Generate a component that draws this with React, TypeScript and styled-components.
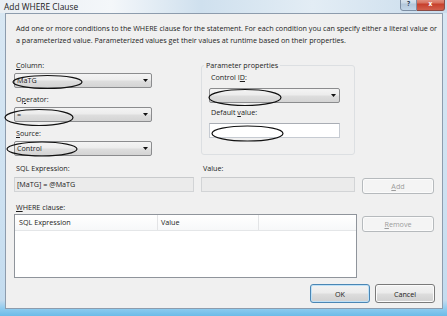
import React from "react";
import styled, { createGlobalStyle } from "styled-components";

const Global = createGlobalStyle`
  html, body { margin: 0; padding: 0; background: #c8ddef; }
  #root { width: 447px; height: 316px; }
`;

const FONT = `"Open Sans", "Noto Sans", "DejaVu Sans", sans-serif`;

const Window = styled.div`
  position: relative;
  width: 447px;
  height: 316px;
  display: flex;
  flex-direction: column;
  overflow: hidden;
  font-family: ${FONT};
  color: #1c1c1c;
  background: linear-gradient(
    180deg,
    #eaf1f7 0px,
    #d8e7f3 13px,
    #cde1f1 200px,
    #c4dcef 300px,
    #8ccaee 309px,
    #6cbbe8 316px
  );
`;

const TitleBar = styled.div`
  flex: none;
  height: 13px;
  display: flex;
  align-items: flex-start;
  justify-content: space-between;
  padding-left: 4px;
  background: linear-gradient(90deg, #e9eef3 0%, #f4f7fa 25%, #cfe0ee 45%, #e3edf5 70%, #c9dcec 100%);
`;

const Title = styled.span`
  font-size: 8.4px;
  line-height: 13px;
  color: #1a1a1a;
`;

const CaptionButtons = styled.div`
  display: flex;
  margin-right: 2px;
  margin-top: -4px;
`;

const CaptionButton = styled.div<{ $close?: boolean }>`
  width: ${(p) => (p.$close ? 28 : 17)}px;
  height: 15px;
  box-sizing: border-box;
  border: 1px solid ${(p) => (p.$close ? "#8a4b45" : "#7d8ea3")};
  border-left-width: ${(p) => (p.$close ? 0 : 1)}px;
  border-radius: ${(p) => (p.$close ? "0 0 3px 0" : "0 0 0 3px")};
  background: ${(p) =>
    p.$close
      ? "linear-gradient(180deg, #e8a99c 0%, #d8725f 45%, #c7402c 55%, #d2604c 100%)"
      : "linear-gradient(180deg, #e5edf4 0%, #cad9e7 45%, #b3c7da 55%, #c3d6e8 100%)"};
  display: flex;
  align-items: flex-end;
  justify-content: center;
  padding-bottom: 2px;
  font-size: 6.5px;
  line-height: 8px;
  font-weight: bold;
  color: ${(p) => (p.$close ? "#ffffff" : "#2c3e55")};
`;

const FrameBody = styled.div`
  flex: 1;
  display: flex;
  padding: 0 6px 7px 5px;
  min-height: 0;
`;

const Client = styled.div`
  flex: 1;
  display: flex;
  flex-direction: column;
  border: 1px solid #8d9cad;
  background: #f0f0f0;
  padding: 8px 5px 0 8px;
  font-size: 7.2px;
`;

const Description = styled.p`
  margin: 0;
  padding-left: 2px;
  line-height: 12px;
  white-space: nowrap;
`;

const TopSection = styled.div`
  margin-top: 13px;
  display: grid;
  grid-template-columns: 180px 154px;
  column-gap: 7px;
  align-items: start;
`;

const Stack = styled.div`
  display: flex;
  flex-direction: column;
`;

const Field = styled.div<{ $gap: number; $after: number }>`
  display: flex;
  flex-direction: column;
  gap: ${(p) => p.$gap}px;
  margin-bottom: ${(p) => p.$after}px;
`;

const Label = styled.span`
  height: 12px;
  line-height: 12px;
  padding-left: 2px;
  white-space: nowrap;
`;

const Combo = styled.div<{ $w: number }>`
  width: ${(p) => p.$w}px;
  height: 15px;
  box-sizing: border-box;
  border: 1px solid #8b8c8e;
  border-radius: 2px;
  background: linear-gradient(180deg, #f4f4f4 0%, #ececec 48%, #dedede 52%, #d4d4d4 100%);
  display: flex;
  align-items: center;
  justify-content: space-between;
  padding: 0 3px 0 2px;
  line-height: 13px;
`;

const Arrow = () => (
  <svg width="5" height="3" viewBox="0 0 5 3">
    <path d="M0 0H5L2.5 3Z" fill="#111" />
  </svg>
);

const TextBox = styled.div<{ $w?: number; $readonly?: boolean }>`
  width: ${(p) => (p.$w ? `${p.$w}px` : "auto")};
  height: 15px;
  box-sizing: border-box;
  border: 1px solid ${(p) => (p.$readonly ? "#d2d4d6" : "#c6cbd2")};
  border-top-color: ${(p) => (p.$readonly ? "#c8cacc" : "#a9adb4")};
  background: ${(p) => (p.$readonly ? "#ebebeb" : "#ffffff")};
  padding: 0 2px;
  line-height: 13px;
  white-space: nowrap;
`;

const Group = styled.fieldset`
  margin: 0;
  min-width: 0;
  border: 1px solid #dcdfe2;
  border-radius: 3px;
  padding: 0 14px 16px 7px;
  display: flex;
  flex-direction: column;
`;

const Legend = styled.legend`
  padding: 0 2px;
  margin-left: -5px;
  line-height: 12px;
  font-size: 7.2px;
`;

const Grid = styled.div<{ $top: number }>`
  margin-top: ${(p) => p.$top}px;
  display: grid;
  grid-template-columns: 180px 154px 72px;
  column-gap: 7px;
  row-gap: 3px;
  align-items: start;
`;

const Button = styled.div<{ $disabled?: boolean; $default?: boolean; $w: number; $h: number; $top?: number }>`
  width: ${(p) => p.$w}px;
  height: ${(p) => p.$h}px;
  margin-top: ${(p) => p.$top ?? 0}px;
  box-sizing: border-box;
  border: 1px solid ${(p) => (p.$disabled ? "#b6babd" : p.$default ? "#4a86b4" : "#7a7a7a")};
  border-radius: 3px;
  background: ${(p) =>
    p.$disabled
      ? "#f4f4f4"
      : "linear-gradient(180deg, #f3f3f3 0%, #ebebeb 48%, #dddddd 52%, #d0d0d0 100%)"};
  box-shadow: ${(p) => (p.$default ? "inset 0 0 0 1px #bfe1f7" : "inset 0 0 0 1px #fbfbfb")};
  color: ${(p) => (p.$disabled ? "#9c9c9c" : "#1c1c1c")};
  display: flex;
  align-items: center;
  justify-content: center;
  line-height: 12px;
`;

const ListRow = styled.div`
  margin-top: 1px;
  display: grid;
  grid-template-columns: 343px 72px;
  column-gap: 5px;
  align-items: start;
`;

const ListBox = styled.div`
  height: 64px;
  box-sizing: border-box;
  border: 1px solid #8f949b;
  background: #ffffff;
`;

const ListHeader = styled.div`
  display: grid;
  grid-template-columns: 143px 101px 1fr;
  height: 15px;
  background: linear-gradient(180deg, #ffffff 0%, #f7f8f9 100%);
  border-bottom: 1px solid #e4e6e8;
`;

const HeaderCell = styled.div<{ $pad: number; $last?: boolean }>`
  padding-left: ${(p) => p.$pad}px;
  line-height: 15px;
  border-right: ${(p) => (p.$last ? "none" : "1px solid #e3e4e6")};
  white-space: nowrap;
`;

const Footer = styled.div`
  margin-top: 6px;
  display: flex;
  justify-content: flex-end;
  gap: 5px;
  padding-right: 2px;
`;

const Marks = styled.svg`
  position: absolute;
  left: 0;
  top: 0;
  pointer-events: none;
`;

export default function App() {
  return (
    <>
      <Global />
      <Window>
        <TitleBar>
          <Title>Add WHERE Clause</Title>
          <CaptionButtons>
            <CaptionButton>?</CaptionButton>
            <CaptionButton $close>x</CaptionButton>
          </CaptionButtons>
        </TitleBar>
        <FrameBody>
          <Client>
            <Description>
              Add one or more conditions to the WHERE clause for the statement. For each condition you can specify either a literal value or
              <br />
              a parameterized value. Parameterized values get their values at runtime based on their properties.
            </Description>

            <TopSection>
              <Stack>
                <Field $gap={2} $after={5}>
                  <Label><u>C</u>olumn:</Label>
                  <Combo $w={138}>
                    <span>MaTG</span>
                    <Arrow />
                  </Combo>
                </Field>
                <Field $gap={2} $after={5}>
                  <Label>O<u>p</u>erator:</Label>
                  <Combo $w={138}>
                    <span>=</span>
                    <Arrow />
                  </Combo>
                </Field>
                <Field $gap={2} $after={0}>
                  <Label><u>S</u>ource:</Label>
                  <Combo $w={138}>
                    <span>Control</span>
                    <Arrow />
                  </Combo>
                </Field>
              </Stack>

              <Group>
                <Legend>Parameter properties</Legend>
                <Field $gap={5} $after={3}>
                  <Label>Control I<u>D</u>:</Label>
                  <Combo $w={131}>
                    <span />
                    <Arrow />
                  </Combo>
                </Field>
                <Field $gap={5} $after={0}>
                  <Label>Default <u>v</u>alue:</Label>
                  <TextBox $w={131} />
                </Field>
              </Group>
            </TopSection>

            <Grid $top={6}>
              <Label>SQL Expression:</Label>
              <Label>Value:</Label>
              <span />
              <TextBox $readonly>[MaTG] = @MaTG</TextBox>
              <TextBox $readonly />
              <Button $disabled $w={72} $h={16} $top={1}>
                <span><u>A</u>dd</span>
              </Button>
            </Grid>

            <Grid $top={7}>
              <Label><u>W</u>HERE clause:</Label>
            </Grid>

            <ListRow>
              <ListBox>
                <ListHeader>
                  <HeaderCell $pad={4}>SQL Expression</HeaderCell>
                  <HeaderCell $pad={3}>Value</HeaderCell>
                  <HeaderCell $pad={0} $last />
                </ListHeader>
              </ListBox>
              <Button $disabled $w={72} $h={16} $top={2}>
                <span><u>R</u>emove</span>
              </Button>
            </ListRow>

            <Footer>
              <Button $default $w={60} $h={19}>OK</Button>
              <Button $w={60} $h={19}>Cancel</Button>
            </Footer>
          </Client>
        </FrameBody>

        <Marks width="447" height="316" viewBox="0 0 447 316">
          <g fill="none" stroke="#111" strokeWidth="1.2">
            <ellipse cx="47.5" cy="82" rx="34.5" ry="6.5" />
            <ellipse cx="39" cy="117.5" rx="34" ry="8" />
            <ellipse cx="42" cy="149" rx="35" ry="7" />
            <ellipse cx="245" cy="97.5" rx="36" ry="8" />
            <ellipse cx="247.5" cy="133.5" rx="35.5" ry="7.5" />
          </g>
        </Marks>
      </Window>
    </>
  );
}
